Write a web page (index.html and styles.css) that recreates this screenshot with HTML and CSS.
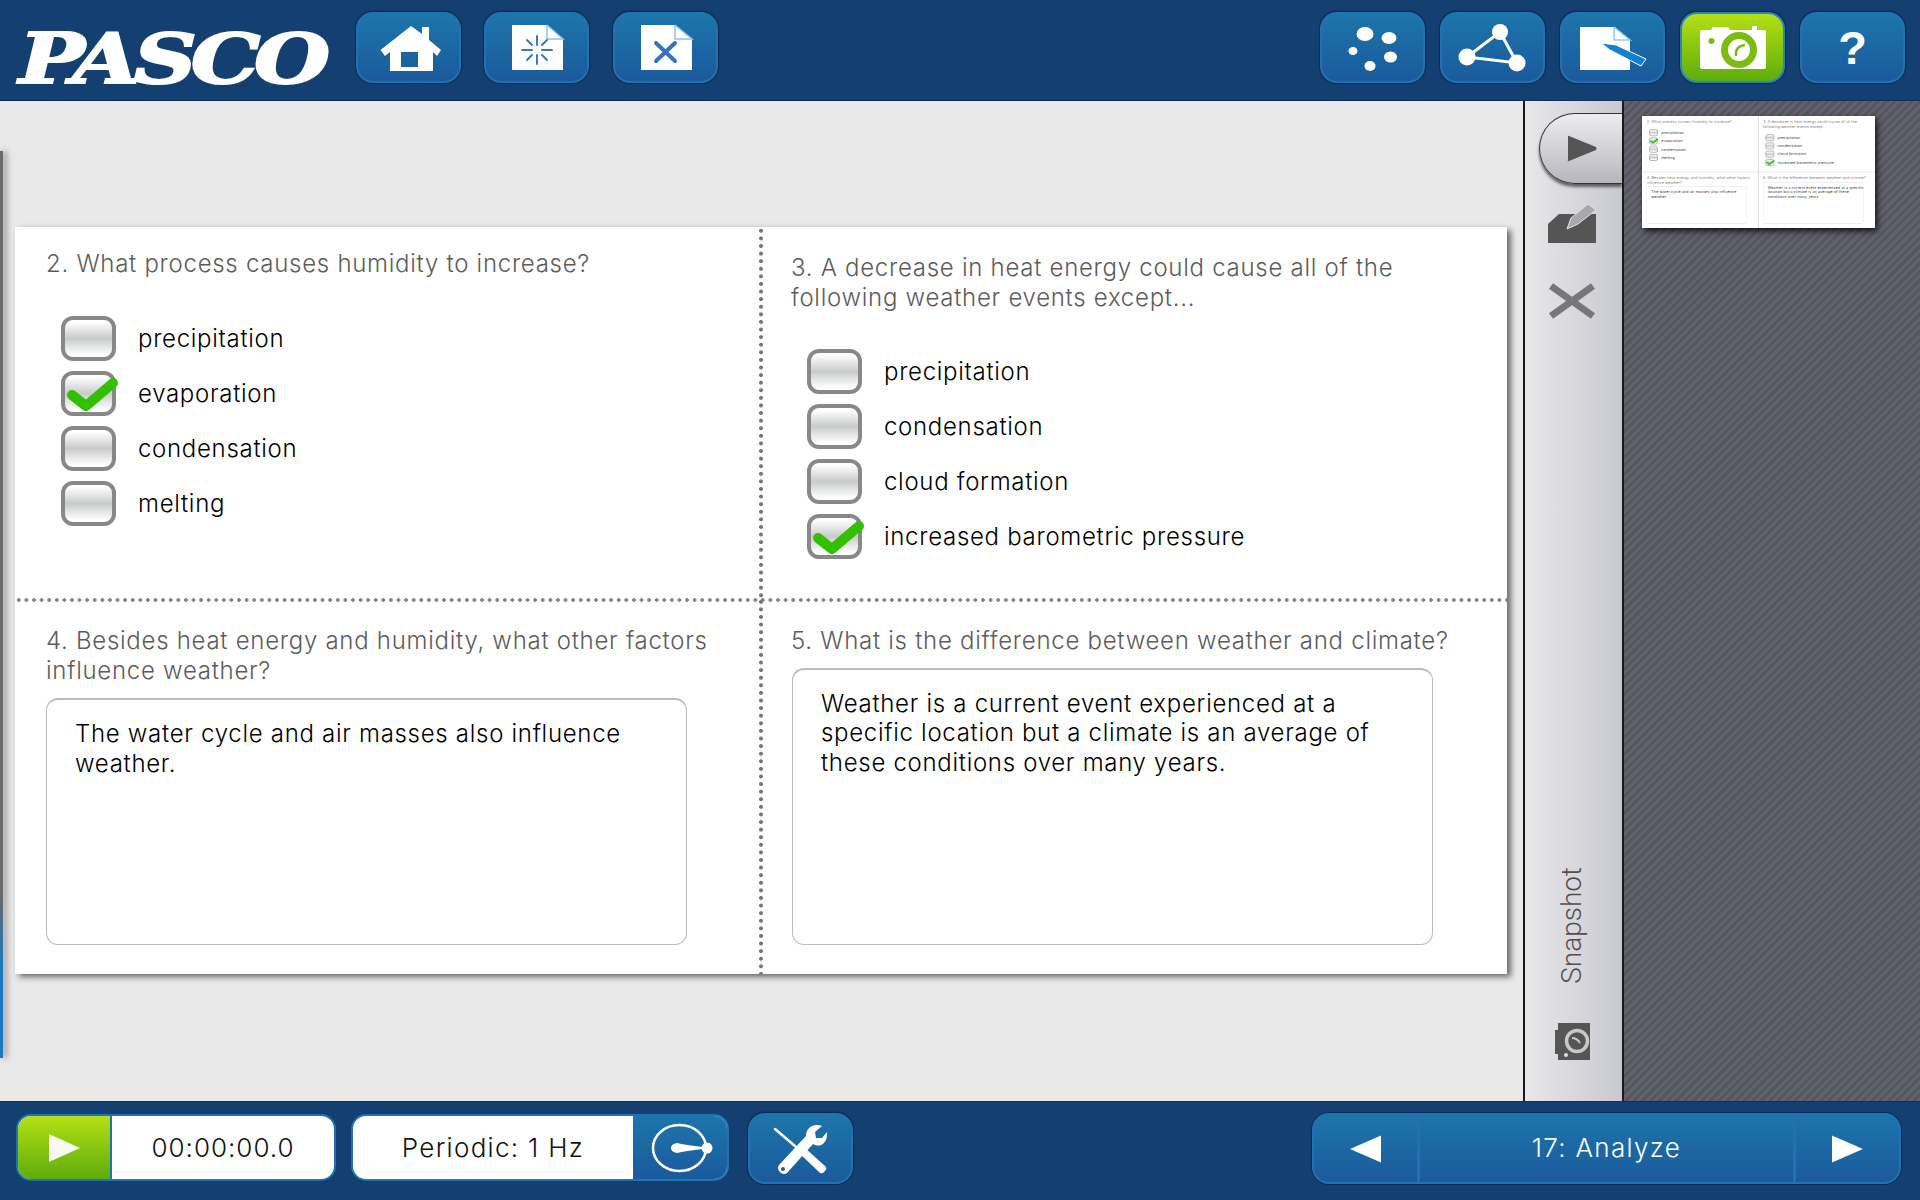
FILE: index.html
```html
<!DOCTYPE html>
<html lang="en">
<head>
<meta charset="utf-8">
<title>PASCO Snapshot</title>
<link rel="stylesheet" href="styles.css">
</head>
<body>
<header class="topbar">
  <svg class="logo" viewBox="0 0 340 100" aria-label="PASCO">
    <text class="logo-text" transform="translate(19 83) scale(1.25 1)">PASCO</text>
  </svg>
  <div class="btn-group left">
    <button class="btn"><svg class="ico" viewBox="0 0 105 71"><path fill="#fff" d="M55 14 66 22V15H73V28L85 38 81 44 77 40V59H34V40L29 44 24.500 38Z"/><rect x="45" y="40" width="17" height="15" fill="#1b63a0"/></svg></button>
    <button class="btn"><svg class="ico" viewBox="0 0 105 71"><path fill="#fff" d="M28 13H63L79 27V58H28Z"/><path fill="none" stroke="#8fc0ee" stroke-width="1.500" d="M63 13V27H79L63 13"/><path stroke="#3b78c2" stroke-width="2" stroke-linecap="round" d="M38 38H48M58 38H68M53 24V33M53 43V52M43 28 48 33M63 28 58 33M43 48 48 43M63 48 58 43"/></svg></button>
    <button class="btn btn-close"><svg class="ico" viewBox="0 0 105 71"><path fill="#fff" d="M28 13H62L79 27V58H28Z"/><path fill="none" stroke="#8fc0ee" stroke-width="1.500" d="M62 13V27H79L62 13"/><path stroke="#3673bd" stroke-width="4" stroke-linecap="round" d="M43 31 62 49M62 31 43 49"/></svg></button>
  </div>
  <div class="btn-group right">
    <button class="btn"><svg class="ico" viewBox="0 0 105 71"><g fill="#fff"><ellipse cx="45" cy="22" rx="8.500" ry="7"/><ellipse cx="69" cy="26" rx="7.500" ry="6"/><ellipse cx="33" cy="39" rx="4.500" ry="4"/><ellipse cx="70.500" cy="45" rx="6.500" ry="5.500"/><ellipse cx="50" cy="54" rx="5.500" ry="5"/></g></svg></button>
    <button class="btn"><svg class="ico" viewBox="0 0 105 71"><path fill="none" stroke="#fff" stroke-width="3" d="M60 20 27 45 77 51Z"/><g fill="#fff"><circle cx="60" cy="20" r="8"/><circle cx="27" cy="45" r="8.500"/><circle cx="77" cy="51" r="8.500"/></g></svg></button>
    <button class="btn"><svg class="ico" viewBox="0 0 105 71"><path fill="#fff" d="M20 15H54L70 28V58H20Z"/><path fill="none" stroke="#8fd0f5" stroke-width="1.500" d="M54 15V28H70L54 15"/><path fill="#1580d0" stroke="#fff" stroke-width="1" d="M41 31 56 33 86 47 81 54 50 38Z"/></svg></button>
    <button class="btn btn-green"><svg class="ico" viewBox="0 0 105 71"><path fill="#fff" d="M22 18H31L33 15H48L50 18H72V14H77V18H84Q86 18 86 20V55Q86 57 84 57H22Q20 57 20 55V20Q20 18 22 18Z"/><circle cx="59" cy="38" r="14.500" fill="none" stroke="#7cbc10" stroke-width="7"/><circle cx="31.500" cy="29" r="3" fill="#7cbc10"/><path fill="none" stroke="#7cbc10" stroke-width="2.500" d="M56 44Q55 34 65 33"/></svg></button>
    <button class="btn btn-help">?</button>
  </div>
</header>

<main class="stage">
  <div class="drawer-edge"></div>
  <section class="content">
    <div class="card">
      <div class="cell cell-q2">
        <p class="q">2. What process causes humidity to increase?</p>
        <ul class="opts">
          <li class="opt"><span class="box"></span>precipitation</li>
          <li class="opt"><span class="box"><svg class="check" viewBox="0 0 60 45"><path d="M11 24 25 35 52 12"/></svg></span>evaporation</li>
          <li class="opt"><span class="box"></span>condensation</li>
          <li class="opt"><span class="box"></span>melting</li>
        </ul>
      </div>
      <div class="cell cell-q3">
        <p class="q">3. A decrease in heat energy could cause all of the<br>following weather events except...</p>
        <ul class="opts">
          <li class="opt"><span class="box"></span>precipitation</li>
          <li class="opt"><span class="box"></span>condensation</li>
          <li class="opt"><span class="box"></span>cloud formation</li>
          <li class="opt"><span class="box"><svg class="check" viewBox="0 0 60 45"><path d="M11 24 25 35 52 12"/></svg></span>increased barometric pressure</li>
        </ul>
      </div>
      <div class="cell cell-q4">
        <p class="q">4. Besides heat energy and humidity, what other factors<br>influence weather?</p>
        <div class="answer answer-q4">The water cycle and air masses also influence<br>weather.</div>
      </div>
      <div class="cell cell-q5">
        <p class="q">5. What is the difference between weather and climate?</p>
        <div class="answer answer-q5">Weather is a current event experienced at a<br>specific location but a climate is an average of<br>these conditions over many years.</div>
      </div>
    </div>
  </section>

  <aside class="rail">
    <button class="rail-tab"><svg class="rail-play" viewBox="0 0 30 27"><path fill="#555" d="M1 1Q0 0 2 1L29 12Q30 13.500 29 15L2 26Q0 27 1 25Z"/></svg></button>
    <svg class="rail-edit" viewBox="0 0 50 39"><path fill="#555" d="M1 20 12 10H49V39H1Z"/><path fill="#a9a9ad" stroke="#e4e4e6" d="M20 25 24 14 41 0 49 6 31 20Z"/></svg>
    <svg class="rail-x" viewBox="0 0 48 36"><path stroke="#777" stroke-width="7" d="M3 3 45 33M45 3 3 33"/></svg>
    <div class="rail-label">Snapshot</div>
    <svg class="rail-cam" viewBox="0 0 35 37"><path fill="#555" d="M3 0H35V37H3V31H0V7H3Z"/><circle cx="22" cy="18" r="10.500" fill="none" stroke="#c8c8cc" stroke-width="3.500"/><path fill="none" stroke="#c8c8cc" stroke-width="2" d="M17 15Q22 15 25 20"/><circle cx="11" cy="32" r="2" fill="#ddd"/></svg>
  </aside>

  <section class="tray">
    <div class="thumb">
      <div class="card thumb-card">
        <div class="cell cell-q2">
          <p class="q">2. What process causes humidity to increase?</p>
          <ul class="opts">
            <li class="opt"><span class="box"></span>precipitation</li>
            <li class="opt"><span class="box"><svg class="check" viewBox="0 0 60 45"><path d="M11 24 25 35 52 12"/></svg></span>evaporation</li>
            <li class="opt"><span class="box"></span>condensation</li>
            <li class="opt"><span class="box"></span>melting</li>
          </ul>
        </div>
        <div class="cell cell-q3">
          <p class="q">3. A decrease in heat energy could cause all of the<br>following weather events except...</p>
          <ul class="opts">
            <li class="opt"><span class="box"></span>precipitation</li>
            <li class="opt"><span class="box"></span>condensation</li>
            <li class="opt"><span class="box"></span>cloud formation</li>
            <li class="opt"><span class="box"><svg class="check" viewBox="0 0 60 45"><path d="M11 24 25 35 52 12"/></svg></span>increased barometric pressure</li>
          </ul>
        </div>
        <div class="cell cell-q4">
          <p class="q">4. Besides heat energy and humidity, what other factors<br>influence weather?</p>
          <div class="answer answer-q4">The water cycle and air masses also influence<br>weather.</div>
        </div>
        <div class="cell cell-q5">
          <p class="q">5. What is the difference between weather and climate?</p>
          <div class="answer answer-q5">Weather is a current event experienced at a specific<br>location but a climate is an average of these<br>conditions over many years.</div>
        </div>
      </div>
    </div>
  </section>
</main>

<footer class="bottombar">
  <div class="ctl ctl-time">
    <button class="ctl-play"><svg class="tri" viewBox="0 0 30 27"><path class="tri-fill" d="M0 0 30 13.500 0 27Z"/></svg></button>
    <div class="ctl-text ctl-clock">00:00:00.0</div>
  </div>
  <div class="ctl ctl-rate">
    <div class="ctl-text">Periodic: 1 Hz</div>
    <button class="ctl-timer"><svg class="timer" viewBox="0 0 94 67"><ellipse cx="46.500" cy="34" rx="26.500" ry="23" fill="none" stroke="#fff" stroke-width="2.500"/><circle cx="74" cy="34" r="5.500" fill="#fff"/><path fill="#fff" d="M44 29Q52 31 70 33V35Q52 37 44 39 38 38 38 34 38 30 44 29Z"/></svg></button>
  </div>
  <button class="btn btn-tools"><svg class="ico" viewBox="0 0 105 71"><path stroke="#fff" stroke-width="2.500" stroke-linecap="round" d="M27 16 54 39"/><path fill="#fff" d="M51 40 56 34 78 54Q79 56 77 58L75 60Q73 61 71 59Z"/><path fill="#fff" d="M31 52 58 23Q58 16 64 13 69 11 74 13L67 19 68 25 74 25 79 19Q80 26 75 31 70 34 65 31L39 60Q36 62 33 60L31 58Q29 55 31 52Z"/><circle cx="35" cy="56" r="2" fill="#1b63a0"/></svg></button>
  <div class="nav">
    <button class="nav-arrow"><svg class="tri" viewBox="0 0 32 28"><path fill="#fff" d="M32 0V28L0 14Z"/></svg></button>
    <div class="nav-title">17: Analyze</div>
    <button class="nav-arrow"><svg class="tri" viewBox="0 0 32 28"><path fill="#fff" d="M0 0V28L32 14Z"/></svg></button>
  </div>
</footer>
</body>
</html>
```

FILE: styles.css
```css
* { box-sizing: border-box; }
html, body { margin: 0; height: 100%; }
body {
  --vdot: #777;
  --hdot: #888;
  display: flex;
  flex-direction: column;
  width: 1920px;
  height: 1200px;
  overflow: hidden;
  font-family: "Inter", "Liberation Sans", sans-serif;
  font-weight: 300;
  background: #134070;
}
button { padding: 0; border: 0; background: none; font: inherit; }

/* top bar */
.topbar {
  flex: 0 0 100px;
  display: flex;
  align-items: flex-start;
  padding: 12px 15px 0 0;
  background: #134070;
  border-bottom: 1px solid #0e3059;
}
.logo { flex: 0 0 340px; width: 340px; height: 100px; margin-top: -12px; margin-right: 16px; overflow: visible; }
.logo-text {
  font-family: "DejaVu Serif", serif;
  font-style: italic;
  font-weight: 700;
  font-size: 70px;
  letter-spacing: -5px;
  fill: #fff;
  stroke: #fff;
  stroke-width: 2px;
}
.btn-group { display: flex; }
.btn-group.left { gap: 23px; }
.btn-group.right { gap: 15px; margin-left: auto; }
.btn-close { margin-left: 1px; }
.btn {
  flex: 0 0 105px;
  width: 105px;
  height: 71px;
  border: 2px solid #2271b3;
  border-radius: 17px;
  background: linear-gradient(#1d75ab, #1b5a9c);
  box-shadow: 0 0 0 1px #0c2d52, 0 -1px 2px #0a2848;
  display: block;
  overflow: hidden;
}
.ico { display: block; width: 105px; height: 71px; margin: -2px; }
.btn-green { background: linear-gradient(#b4e014, #5eac0c); border-color: #2c85b5; }
.btn-help {
  color: #fff;
  font-family: "Liberation Sans", sans-serif;
  font-weight: 700;
  font-size: 47px;
  line-height: 67px;
  text-align: center;
}

/* stage */
.stage { flex: 0 0 1000px; display: flex; position: relative; }
.drawer-edge {
  position: absolute;
  left: 0;
  top: 50px;
  width: 3px;
  height: 907px;
  background: linear-gradient(#6a6a6a 0, #6a6a6a 82%, #1878c0 90%);
  box-shadow: 3px 0 6px rgba(0,0,0,.55);
}
.content {
  flex: 0 0 1525px;
  padding: 126px 0 0 15px;
  background: #e9e9e9;
  border-right: 2px solid #1c1c1c;
}
.card {
  width: 1492px;
  height: 747px;
  display: grid;
  grid-template-columns: 744px 748px;
  grid-template-rows: 371px 376px;
  background: #fff;
  box-shadow: 4px 3px 6px rgba(0,0,0,.55);
}
.cell { min-width: 0; }
.cell-q2 { padding: 22px 30px 0 31px; }
.cell-q3 {
  padding: 26px 30px 0 32px;
  background: radial-gradient(circle, var(--vdot) 1.800px, transparent 2.200px) left 0 top 0 / 4px 7.600px repeat-y;
}
.cell-q4 {
  padding: 28px 30px 0 31px;
  background: radial-gradient(circle, var(--hdot) 1.700px, transparent 2.100px) left 0 top 0 / 7.600px 4px repeat-x;
}
.cell-q5 {
  padding: 28px 30px 0 32px;
  background:
    radial-gradient(circle, var(--vdot) 1.800px, transparent 2.200px) left 0 top 0 / 4px 7.600px repeat-y,
    radial-gradient(circle, var(--hdot) 1.700px, transparent 2.100px) left 0 top 0 / 7.600px 4px repeat-x;
}

.q {
  margin: 0;
  font-size: 24px;
  line-height: 29.500px;
  color: #5c5c5c;
  letter-spacing: .72px;
  white-space: nowrap;
}
.opts { list-style: none; margin: 0; padding: 0 0 0 15px; }
.cell-q3 .opts { padding-left: 16px; }
.cell-q2 .opts { margin-top: 37.500px; }
.cell-q3 .opts { margin-top: 37px; }
.opt {
  display: flex;
  align-items: center;
  height: 45px;
  margin-bottom: 10px;
  font-size: 24px;
  color: #000;
  letter-spacing: .7px;
}
.box {
  position: relative;
  flex: 0 0 55px;
  height: 45px;
  margin-right: 22px;
  border: 4px solid #888;
  border-radius: 12px;
  background: linear-gradient(#fff 5%, #c9cbcb 50%, #fff 95%);
}
.check { position: absolute; left: -4px; top: -4px; width: 60px; height: 45px; overflow: visible; }
.check path { fill: none; stroke: #33c000; stroke-width: 10; stroke-linecap: round; stroke-linejoin: round; }

.answer {
  width: 641px;
  height: 247px;
  padding: 19px 28px 0;
  border: 1px solid #bbb;
  border-top: 2px solid #bbb;
  border-radius: 12px;
  font-size: 24px;
  line-height: 29.500px;
  color: #000;
  letter-spacing: .7px;
  white-space: nowrap;
}
.cell-q4 .answer { margin-top: 13px; }
.cell-q5 .answer { margin: 12px 0 0 1px; height: 277px; }

/* rail */
.rail {
  flex: 0 0 99px;
  display: flex;
  flex-direction: column;
  align-items: center;
  padding-right: 3px;
  background: linear-gradient(90deg, #e8e8ea, #c8c8d0);
  border-right: 2px solid #1c1c1c;
}
.rail-tab {
  align-self: flex-end;
  width: 83px;
  height: 71px;
  margin: 12px -3px 0 0;
  border: 1px solid #333;
  border-right: 0;
  border-radius: 36px 0 0 36px;
  background: linear-gradient(#ededef, #b6b6be);
  box-shadow: 0 3px 3px rgba(0,0,0,.55);
  display: flex;
  align-items: center;
  padding-left: 27px;
}
.rail-play { width: 30px; height: 27px; }
.rail-edit { width: 50px; height: 39px; margin-top: 20px; }
.rail-x { width: 48px; height: 36px; margin-top: 40px; }
.rail-label {
  margin-top: auto;
  writing-mode: vertical-rl;
  transform: rotate(180deg);
  font-family: "Roboto", "Liberation Sans", sans-serif;
  font-size: 28px;
  font-weight: 300;
  line-height: 30px;
  color: #505050;
}
.rail-cam { width: 35px; height: 37px; margin: 39px 0 41px; }

/* tray */
.tray {
  flex: 1;
  padding: 15px 0 0 18px;
  background: repeating-linear-gradient(-45deg, #62626c 0 3px, #565660 3px 6px);
}
.thumb { width: 233px; height: 112px; background: #fff; box-shadow: 2px 3px 6px rgba(0,0,0,.8); overflow: hidden; }
.thumb-card { --vdot: #bbb; --hdot: #bbb; transform: scale(.156, .15); transform-origin: 0 0; box-shadow: none; }

/* bottom bar */
.bottombar {
  flex: 1;
  display: flex;
  align-items: flex-start;
  padding: 11px 19px 0 16px;
  background: #134070;
  border-top: 1px solid #0e3059;
}
.ctl {
  display: flex;
  height: 67px;
  margin-top: 1px;
  border: 2px solid #2271b3;
  border-radius: 15px;
  overflow: hidden;
  background: #fff;
}
.ctl-time { width: 320px; }
.ctl-rate { width: 378px; margin-left: 15px; }
.ctl-play {
  flex: 0 0 94px;
  background: linear-gradient(#b4e014, #5eac0c);
  border-right: 2px solid #2271b3;
  display: flex;
  align-items: center;
  justify-content: center;
}
.tri { width: 31px; height: 28px; }
.tri-fill { fill: #fff; opacity: .92; }
.ctl-text {
  flex: 1;
  text-align: center;
  font-size: 26px;
  line-height: 63px;
  color: #111;
  letter-spacing: 1.300px;
}
.ctl-clock { letter-spacing: 1px; }
.ctl-timer {
  flex: 0 0 93px;
  background: linear-gradient(#1d75ab, #1b5a9c);
  display: flex;
}
.timer { flex: 0 0 94px; width: 94px; height: 67px; margin-top: -2px; }
.btn-tools { margin-left: 19px; }
.nav {
  margin-left: auto;
  width: 589px;
  height: 71px;
  display: flex;
  border: 2px solid #2271b3;
  border-radius: 17px;
  background: linear-gradient(#1d75ab, #1b5a9c);
  box-shadow: 0 0 0 1px #0c2d52;
}
.nav-arrow {
  flex: 0 0 103px;
  display: flex;
  align-items: center;
  justify-content: center;
}
.nav-title {
  flex: 1;
  border-left: 3px solid #2271b3;
  border-right: 3px solid #2271b3;
  text-align: center;
  line-height: 65px;
  font-size: 26px;
  color: #fff;
  letter-spacing: 1.300px;
}
```
